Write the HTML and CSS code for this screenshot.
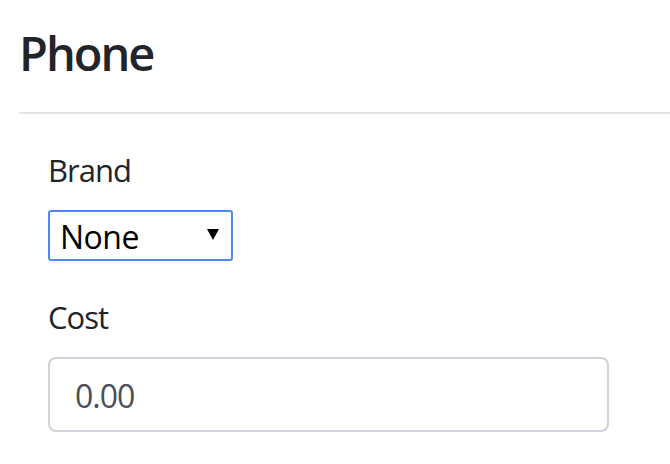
FILE: index.html
```html
<!DOCTYPE html>
<html lang="en">
<head>
<meta charset="utf-8">
<title>Phone</title>
<link rel="stylesheet" href="styles.css">
</head>
<body>
<div class="panel">
  <h2 class="title">Phone</h2>
  <hr class="divider">
  <form class="form">
    <div class="group">
      <label class="label" for="brand">Brand</label>
      <span class="select-wrap">
        <select class="select" id="brand">
          <option>None</option>
        </select>
        <svg class="caret" width="12" height="11" viewBox="0 0 12 11" aria-hidden="true"><polygon points="0,0 12,0 6,11" fill="#000"/></svg>
      </span>
    </div>
    <div class="group">
      <label class="label" for="cost">Cost</label>
      <input class="input" id="cost" type="text" value="0.00">
    </div>
  </form>
</div>
</body>
</html>
```
FILE: styles.css
```css
html, body {
  margin: 0;
  padding: 0;
  background: #fff;
}
body {
  font-family: "Open Sans", "Noto Sans", "DejaVu Sans", sans-serif;
  color: #212529;
}
.panel {
  margin-left: 19px;
  padding-top: 24px;
}
.title {
  margin: 0;
  font-size: 47px;
  line-height: 58px;
  font-weight: 600;
  letter-spacing: -2px;
  color: #212529;
}
.divider {
  margin: 30px 0 0 0;
  border: 0;
  height: 2px;
  background: #e5e5e5;
}
.form {
  width: 561px;
  padding: 32px 0 0 29px;
  margin: 0;
}
.group {
  display: flex;
  flex-direction: column;
  align-items: flex-start;
  margin-bottom: 32px;
}
.label {
  font-size: 31px;
  line-height: 48px;
  letter-spacing: -1px;
  margin-bottom: 16px;
  padding-top: 1px;
  margin-top: -1px;
}
.select-wrap {
  position: relative;
  display: inline-block;
}
.select {
  appearance: none;
  -webkit-appearance: none;
  box-sizing: border-box;
  width: 185px;
  height: 51px;
  margin: 0;
  padding: 2px 30px 0 10px;
  border: 2px solid #4f87f5;
  border-radius: 3px;
  background: #fff;
  font-family: "Open Sans", "Noto Sans", sans-serif;
  font-size: 32px;
  letter-spacing: -0.5px;
  color: #000;
  outline: none;
}
.caret {
  position: absolute;
  left: 159px;
  top: 19px;
  pointer-events: none;
}
.input {
  box-sizing: border-box;
  width: 561px;
  height: 75px;
  margin: 0;
  padding: 2px 25px 0;
  border: 2px solid #ced4da;
  border-radius: 8px;
  background: #fff;
  font-family: "Open Sans", "Noto Sans", sans-serif;
  font-size: 32px;
  letter-spacing: -1px;
  color: #495057;
  outline: none;
}
```
